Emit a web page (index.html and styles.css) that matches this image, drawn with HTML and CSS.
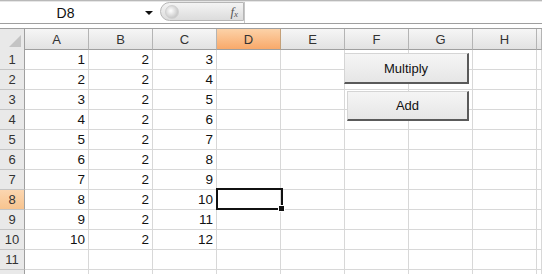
FILE: index.html
```html
<!DOCTYPE html>
<html>
<head>
<meta charset="utf-8">
<link rel="stylesheet" href="styles.css">
</head>
<body>
<div class="app">
  <div class="fbar">
    <div class="namebox"><span class="nb-text">D8</span><span class="nb-arrow"></span></div>
    <div class="pill"><span class="knob"></span><span class="fx">f<sub>x</sub></span></div>
    <div class="finput"></div>
  </div>
  <div class="sheet">
    <div class="grid" id="grid"></div>
    <div class="btn btn-mul">Multiply</div>
    <div class="btn btn-add">Add</div>
    <div class="sel"><span class="handle"></span></div>
  </div>
</div>
<script src="app.js"></script>
</body>
</html>
```
FILE: styles.css
```css
html, body { margin: 0; padding: 0; background: #fff; }
body { width: 542px; height: 274px; overflow: hidden; font-family: "Liberation Sans", Arial, sans-serif; }
.app { width: 542px; height: 274px; overflow: hidden; }
.fbar {
  height: 21px;
  border-top: 1px solid #b9b9b9;
  box-shadow: inset 0 1px 0 #e6e6e6;
  border-bottom: 1px solid #9f9f9f;
  padding-top: 1px;
  display: flex;
  background: #fff;
}
.namebox { width: 160px; display: flex; align-items: center; position: relative; font-size: 14px; color: #111; }
.nb-text { flex: 1; text-align: center; padding-right: 14px; }
.nb-arrow { width: 0; height: 0; border-left: 4px solid transparent; border-right: 4px solid transparent; border-top: 4px solid #111; margin-right: 7px; }
.pill {
  width: 84px; height: 19px; margin-top: 0;
  border: 1px solid #b6b6b6; border-radius: 10px 0 0 10px;
  background: linear-gradient(#f4f4f4, #dcdcdc);
  display: flex; align-items: center; justify-content: space-between;
  box-sizing: border-box;
}
.knob { width: 12px; height: 12px; border-radius: 50%; background: radial-gradient(circle at 40% 40%, #fff, #c9c9c9 70%); margin-left: 4px; border: 1px solid #d0d0d0; }
.fx { font-family: "Liberation Serif", serif; font-style: italic; font-size: 13px; color: #555; margin-right: 5px; }
.fx sub { font-size: 9px; vertical-align: -1px; }
.finput { flex: 1; border-left: 1px solid #c6c6c6; }
.sheet { position: relative; margin-top: 4px; border-top: 1px solid #9f9f9f; }
.grid {
  display: grid;
  grid-template-columns: 25px repeat(8, 64px) 5px;
  grid-template-rows: 21px repeat(12, 20px);
}
.c { border-right: 1px solid #d8d8d8; border-bottom: 1px solid #d8d8d8; box-sizing: border-box; font-size: 13.5px; color: #111; text-align: right; padding-right: 3px; line-height: 20px; }
.h { background: linear-gradient(#f6f6f6, #e2e2e2); border-right: 1px solid #b4b4b4; border-bottom: 1px solid #9f9f9f; text-align: center; padding: 0; color: #333; font-size: 13px; line-height: 21px; }
.rh { background: #e9e9e9; border-right: 1px solid #9f9f9f; border-bottom: 1px solid #c4c4c4; text-align: center; padding: 0; color: #333; font-size: 13px; line-height: 20px; }
.corner { background: #e9e9e9; border-right: 1px solid #9f9f9f; position: relative; }
.corner::after { content: ""; position: absolute; right: 3px; bottom: 3px; width: 0; height: 0; border-left: 12px solid transparent; border-bottom: 12px solid #c4c4c4; }
.h.on { background: linear-gradient(#fcd2a8, #f9a96a); border-right-color: #c4a078; color: #333; }
.rh.on { background: linear-gradient(#fbd6b0, #f8c48f); color: #333; }
.btn {
  position: absolute; box-sizing: border-box;
  background: linear-gradient(#f5f5f5, #e6e6e6);
  border: 1px solid #d5d5d5; border-right: 2px solid #5a5a5a; border-bottom: 2px solid #5a5a5a;
  font-size: 13px; color: #111; text-align: center;
  display: flex; align-items: center; justify-content: center;
}
.btn-mul { left: 344px; top: 24px; width: 125px; height: 31px; }
.btn-add { left: 347px; top: 62px; width: 122px; height: 30px; }
.sel { position: absolute; left: 216px; top: 159px; width: 67px; height: 22px; border: 2px solid #111; box-sizing: border-box; }
.handle { position: absolute; right: -4px; bottom: -4px; width: 5px; height: 5px; background: #111; border: 1px solid #fff; }
```
FILE: app.js
```js
var g = document.getElementById('grid');
var cols = ['A','B','C','D','E','F','G','H'];
function cell(cls, txt) { var d = document.createElement('div'); d.className = cls; d.textContent = txt || ''; g.appendChild(d); }
cell('corner');
cols.forEach(function (c) { cell('c h' + (c === 'D' ? ' on' : ''), c); });
cell('c h');
for (var r = 1; r <= 12; r++) {
  cell('c rh' + (r === 8 ? ' on' : ''), r);
  for (var i = 0; i < 8; i++) {
    var t = '';
    if (r <= 10) { if (i === 0) t = r; else if (i === 1) t = 2; else if (i === 2) t = r + 2; }
    cell('c', t);
  }
  cell('c', '');
}
```
